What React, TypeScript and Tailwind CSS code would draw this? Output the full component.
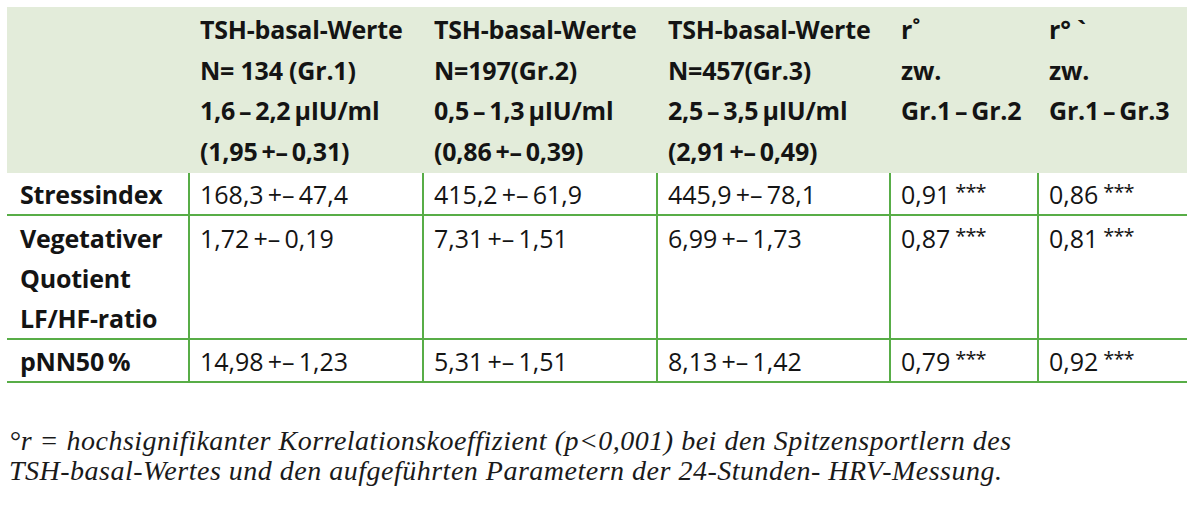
import React from "react"

const T = "\u2009"

const headerCols = [
  ["TSH-basal-Werte", "N= 134 (Gr.1)", `1,6${T}–${T}2,2${T}µIU/ml`, `(1,95${T}+–${T}0,31)`],
  ["TSH-basal-Werte", "N=197(Gr.2)", `0,5${T}–${T}1,3${T}µIU/ml`, `(0,86${T}+–${T}0,39)`],
  ["TSH-basal-Werte", "N=457(Gr.3)", `2,5${T}–${T}3,5${T}µIU/ml`, `(2,91${T}+–${T}0,49)`],
  ["r˚", "zw.", `Gr.1${T}–${T}Gr.2`],
  ["r°  `", "zw.", `Gr.1${T}–${T}Gr.3`],
]

const rows = [
  {
    label: ["Stressindex"],
    values: [`168,3${T}+–${T}47,4`, `415,2${T}+–${T}61,9`, `445,9${T}+–${T}78,1`],
    r: ["0,91", "0,86"],
    pad: "pt-[1px]",
  },
  {
    label: ["Vegetativer", "Quotient", "LF/HF-ratio"],
    values: [`1,72${T}+–${T}0,19`, `7,31${T}+–${T}1,51`, `6,99${T}+–${T}1,73`],
    r: ["0,87", "0,81"],
    pad: "pt-[2px]",
  },
  {
    label: [`pNN50${T}%`],
    values: [`14,98${T}+–${T}1,23`, `5,31${T}+–${T}1,51`, `8,13${T}+–${T}1,42`],
    r: ["0,79", "0,92"],
    pad: "pt-[1px]",
  },
]

const cols = "grid grid-cols-[182px_234px_234px_233px_148px_149px]"

function Corr({ value }: { value: string }) {
  return (
    <span>
      {value}
      <span className="relative -top-[5px] ml-[5px] text-[20px] leading-[0] tracking-[-1px]">***</span>
    </span>
  )
}

export default function App() {
  return (
    <div className="w-[1200px] h-[509px] bg-white pl-[7px] pt-[7px] text-[#141414] [font-family:'Open_Sans',sans-serif]">
      <div className="w-[1180px]">
        {/* Header band */}
        <div className={`${cols} bg-[#e3ecda] pt-[2px] pb-[2px] text-[25px] font-bold leading-[40.5px] tracking-[-0.2px]`}>
          <div />
          {headerCols.map((lines, i) => (
            <div key={i} className="pl-[11px] whitespace-nowrap">
              {lines.map((line) => (
                <div key={line}>{line}</div>
              ))}
            </div>
          ))}
        </div>

        {/* Body rows */}
        {rows.map((row) => (
          <div key={row.label[0]} className={`${cols} border-b-2 border-[#58ad47] text-[25px] leading-[40px]`}>
            <div className={`${row.pad} pl-[13px] font-bold whitespace-nowrap tracking-[-0.2px]`}>
              {row.label.map((l) => (
                <div key={l}>{l}</div>
              ))}
            </div>
            {row.values.map((v) => (
              <div key={v} className={`${row.pad} -ml-[1px] border-l-2 border-[#58ad47] pl-[10px] whitespace-nowrap`}>
                {v}
              </div>
            ))}
            {row.r.map((v) => (
              <div key={v} className={`${row.pad} -ml-[1px] border-l-2 border-[#58ad47] pl-[10px] whitespace-nowrap`}>
                <Corr value={v} />
              </div>
            ))}
          </div>
        ))}

        {/* Footnote */}
        <p className="mt-[43px] pl-[2px] whitespace-nowrap text-[28px] italic leading-[30px] tracking-[0.5px] text-[#1a1a1a] [font-family:'Liberation_Serif',serif]">
          °r = hochsignifikanter Korrelationskoeffizient (p&lt;0,001) bei den Spitzensportlern des
          <br />
          TSH-basal-Wertes und den aufgeführten Parametern der 24-Stunden- HRV-Messung.
        </p>
      </div>
    </div>
  )
}
